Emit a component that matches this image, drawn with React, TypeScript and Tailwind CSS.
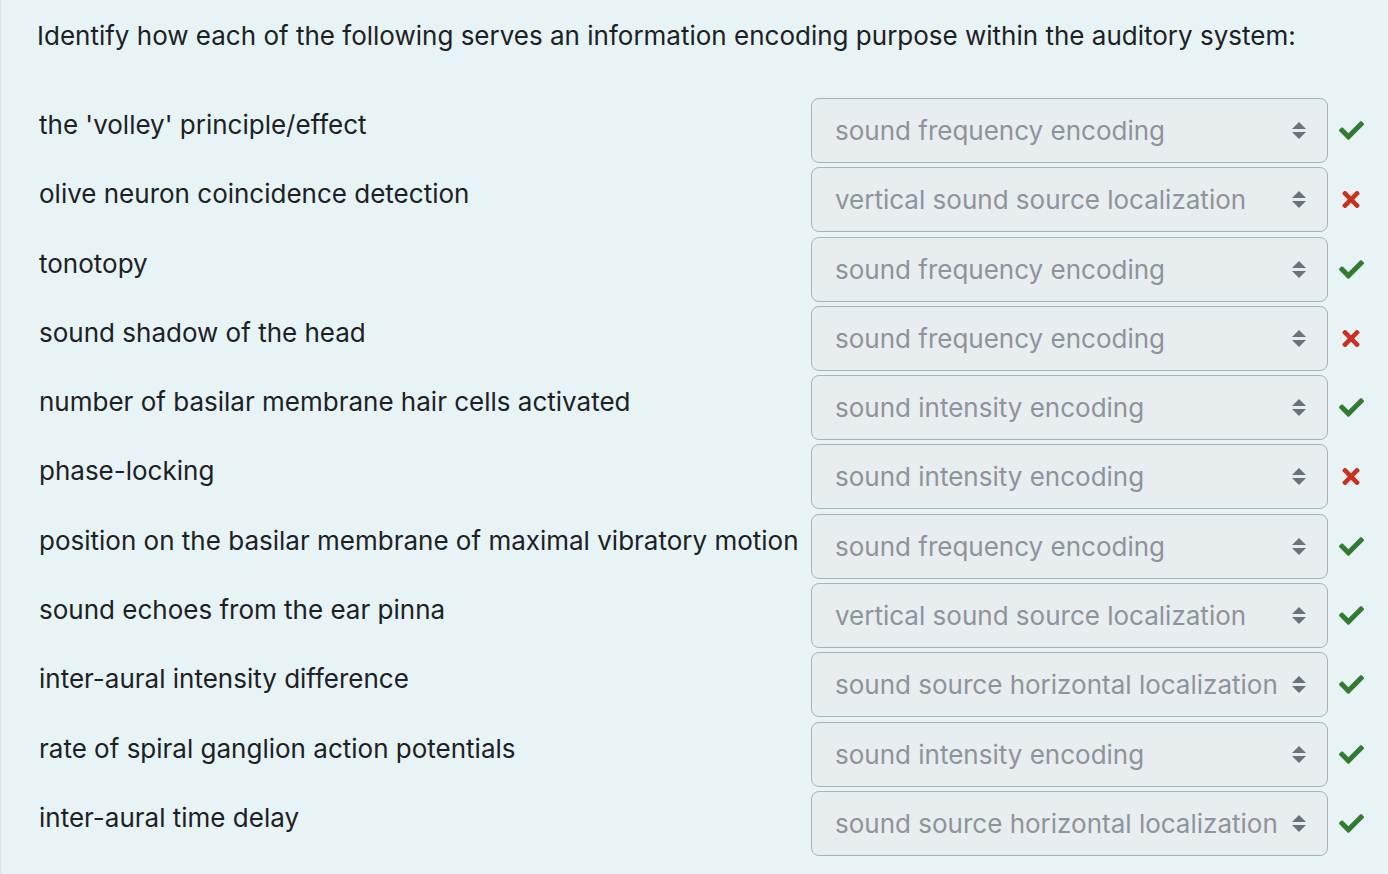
import React from "react";

const rows: { label: string; value: string; ok: boolean }[] = [
  { label: "the 'volley' principle/effect", value: "sound frequency encoding", ok: true },
  { label: "olive neuron coincidence detection", value: "vertical sound source localization", ok: false },
  { label: "tonotopy", value: "sound frequency encoding", ok: true },
  { label: "sound shadow of the head", value: "sound frequency encoding", ok: false },
  { label: "number of basilar membrane hair cells activated", value: "sound intensity encoding", ok: true },
  { label: "phase-locking", value: "sound intensity encoding", ok: false },
  { label: "position on the basilar membrane of maximal vibratory motion", value: "sound frequency encoding", ok: true },
  { label: "sound echoes from the ear pinna", value: "vertical sound source localization", ok: true },
  { label: "inter-aural intensity difference", value: "sound source horizontal localization", ok: true },
  { label: "rate of spiral ganglion action potentials", value: "sound intensity encoding", ok: true },
  { label: "inter-aural time delay", value: "sound source horizontal localization", ok: true },
];

function SortArrows() {
  return (
    <svg width="14" height="17" viewBox="0 0 14 17" className="shrink-0">
      <polygon points="0,7 7,0 14,7" fill="#6a737b" />
      <polygon points="0,10 14,10 7,17" fill="#6a737b" />
    </svg>
  );
}

function CheckIcon() {
  return (
    <svg width="25" height="25" viewBox="0 0 512 512">
      <path
        fill="#357a32"
        d="M173.898 439.404l-166.4-166.4c-9.997-9.997-9.997-26.206 0-36.204l36.203-36.204c9.997-9.998 26.207-9.998 36.204 0L192 312.69 432.095 72.596c9.997-9.997 26.207-9.997 36.204 0l36.203 36.204c9.997 9.997 9.997 26.206 0 36.204l-294.4 294.401c-9.998 9.997-26.207 9.997-36.204-.001z"
      />
    </svg>
  );
}

function TimesIcon() {
  return (
    <svg width="20" height="25" viewBox="0 0 352 512">
      <path
        fill="#ca3120"
        d="M242.72 256l100.07-100.07c12.28-12.28 12.28-32.19 0-44.48l-22.24-22.24c-12.28-12.28-32.19-12.28-44.48 0L176 189.28 75.93 89.21c-12.28-12.28-32.19-12.28-44.48 0L9.21 111.45c-12.28 12.28-12.28 32.19 0 44.48L109.28 256 9.21 356.07c-12.28 12.28-12.28 32.19 0 44.48l22.24 22.24c12.28 12.28 32.2 12.28 44.48 0L176 322.72l100.07 100.07c12.28 12.28 32.2 12.28 44.48 0l22.24-22.24c12.28-12.28 12.28-32.19 0-44.48L242.72 256z"
      />
    </svg>
  );
}

export default function App() {
  return (
    <div
      className="w-[1388px] h-[874px] bg-[#e7f3f5] border-l border-[#d8e4e6] text-[#1d2125] overflow-hidden"
      style={{ fontFamily: "Inter, 'Noto Sans', 'Liberation Sans', sans-serif" }}
    >
      <div className="pl-[36px] pt-[16px]">
        <p className="text-[26px] leading-[40px]">
          Identify how each of the following serves an information encoding purpose within the auditory system:
        </p>
        <div className="mt-[42px] flex flex-col gap-[4.3px]">
          {rows.map((r, i) => (
            <div key={i} className="flex items-start">
              <div className="w-[774px] pl-[2px] pt-[7px] text-[26px] leading-[39px] whitespace-nowrap">
                {r.label}
              </div>
              <div className="w-[517px] h-[65px] rounded-[8px] border border-[#a9b1b9] bg-[#e8edf0] flex items-center pl-[23px] pr-[21px]">
                <span className="flex-1 text-[26px] text-[#8d949c] whitespace-nowrap">{r.value}</span>
                <SortArrows />
              </div>
              <div className="h-[65px] w-[46px] flex items-center justify-center">
                {r.ok ? <CheckIcon /> : <TimesIcon />}
              </div>
            </div>
          ))}
        </div>
      </div>
    </div>
  );
}
